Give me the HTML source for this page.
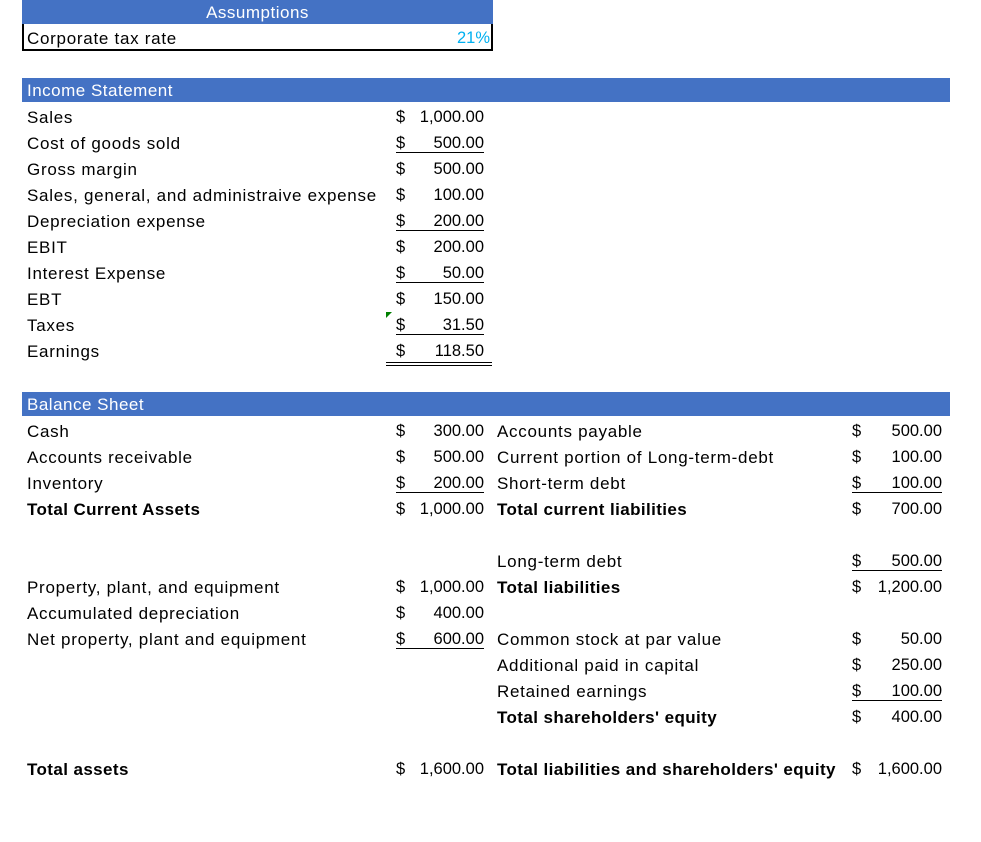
<!DOCTYPE html>
<html><head><meta charset="utf-8"><style>
body{margin:0;width:981px;height:842px;background:#fff;position:relative;overflow:hidden;font-family:"Liberation Sans",sans-serif;font-size:16.5px;color:#000;}
div{position:absolute;white-space:nowrap;}
.r{height:26px;line-height:27px;}
.l,.l2{font-size:17px;letter-spacing:0.72px;}
.l{left:27px;}
.l2{left:497px;}
.b{font-weight:bold;letter-spacing:0.4px;}
.a{left:396px;width:88px;height:22px;line-height:27px;}
.a2{left:852px;width:90px;height:22px;line-height:27px;}
.a span,.a2 span{float:right;}
.u{border-bottom:1px solid #000;}
.hdr{background:#4472c4;color:#fff;height:24px;line-height:26px;font-size:17px;letter-spacing:0.5px;}
</style></head><body>
<div class="hdr" style="left:22px;top:0;width:471px;text-align:center;">Assumptions</div>
<div style="left:22px;top:24px;width:467px;height:25px;border:2px solid #000;border-top:none;"></div>
<div class="r l" style="top:25px;">Corporate tax rate</div>
<div class="r" style="top:25px;left:400px;width:90px;text-align:right;color:#00b0f0;">21%</div>

<div class="hdr" style="left:22px;top:78px;width:928px;"><span style="padding-left:5px">Income Statement</span></div>
<div class="r l" style="top:104px">Sales</div><div class="a" style="top:104px">$<span>1,000.00</span></div>
<div class="r l" style="top:130px">Cost of goods sold</div><div class="a u" style="top:130px">$<span>500.00</span></div>
<div class="r l" style="top:156px">Gross margin</div><div class="a" style="top:156px">$<span>500.00</span></div>
<div class="r l" style="top:182px">Sales, general, and administraive expense</div><div class="a" style="top:182px">$<span>100.00</span></div>
<div class="r l" style="top:208px">Depreciation expense</div><div class="a u" style="top:208px">$<span>200.00</span></div>
<div class="r l" style="top:234px">EBIT</div><div class="a" style="top:234px">$<span>200.00</span></div>
<div class="r l" style="top:260px">Interest Expense</div><div class="a u" style="top:260px">$<span>50.00</span></div>
<div class="r l" style="top:286px">EBT</div><div class="a" style="top:286px">$<span>150.00</span></div>
<div class="r l" style="top:312px">Taxes</div><div class="a u" style="top:312px">$<span>31.50</span></div>
<div style="left:386px;top:312px;width:0;height:0;border-top:6px solid #008000;border-right:6px solid transparent;"></div>
<div class="r l" style="top:338px">Earnings</div><div class="a" style="top:338px">$<span>118.50</span></div>
<div style="left:386px;top:362px;width:106px;height:2px;border-top:1px solid #000;border-bottom:1px solid #000;"></div>

<div class="hdr" style="left:22px;top:392px;width:928px;"><span style="padding-left:5px">Balance Sheet</span></div>
<div class="r l" style="top:418px">Cash</div><div class="a" style="top:418px">$<span>300.00</span></div>
<div class="r l2" style="top:418px">Accounts payable</div><div class="a2" style="top:418px">$<span>500.00</span></div>
<div class="r l" style="top:444px">Accounts receivable</div><div class="a" style="top:444px">$<span>500.00</span></div>
<div class="r l2" style="top:444px">Current portion of Long-term-debt</div><div class="a2" style="top:444px">$<span>100.00</span></div>
<div class="r l" style="top:470px">Inventory</div><div class="a u" style="top:470px">$<span>200.00</span></div>
<div class="r l2" style="top:470px">Short-term debt</div><div class="a2 u" style="top:470px">$<span>100.00</span></div>
<div class="r l b" style="top:496px">Total Current Assets</div><div class="a" style="top:496px">$<span>1,000.00</span></div>
<div class="r l2 b" style="top:496px">Total current liabilities</div><div class="a2" style="top:496px">$<span>700.00</span></div>

<div class="r l2" style="top:548px">Long-term debt</div><div class="a2 u" style="top:548px">$<span>500.00</span></div>
<div class="r l" style="top:574px">Property, plant, and equipment</div><div class="a" style="top:574px">$<span>1,000.00</span></div>
<div class="r l2 b" style="top:574px">Total liabilities</div><div class="a2" style="top:574px">$<span>1,200.00</span></div>
<div class="r l" style="top:600px">Accumulated depreciation</div><div class="a" style="top:600px">$<span>400.00</span></div>
<div class="r l" style="top:626px">Net property, plant and equipment</div><div class="a u" style="top:626px">$<span>600.00</span></div>
<div class="r l2" style="top:626px">Common stock at par value</div><div class="a2" style="top:626px">$<span>50.00</span></div>
<div class="r l2" style="top:652px">Additional paid in capital</div><div class="a2" style="top:652px">$<span>250.00</span></div>
<div class="r l2" style="top:678px">Retained earnings</div><div class="a2 u" style="top:678px">$<span>100.00</span></div>
<div class="r l2 b" style="top:704px">Total shareholders' equity</div><div class="a2" style="top:704px">$<span>400.00</span></div>

<div class="r l b" style="top:756px">Total assets</div><div class="a" style="top:756px">$<span>1,600.00</span></div>
<div class="r l2 b" style="top:756px">Total liabilities and shareholders' equity</div><div class="a2" style="top:756px">$<span>1,600.00</span></div>
</body></html>
